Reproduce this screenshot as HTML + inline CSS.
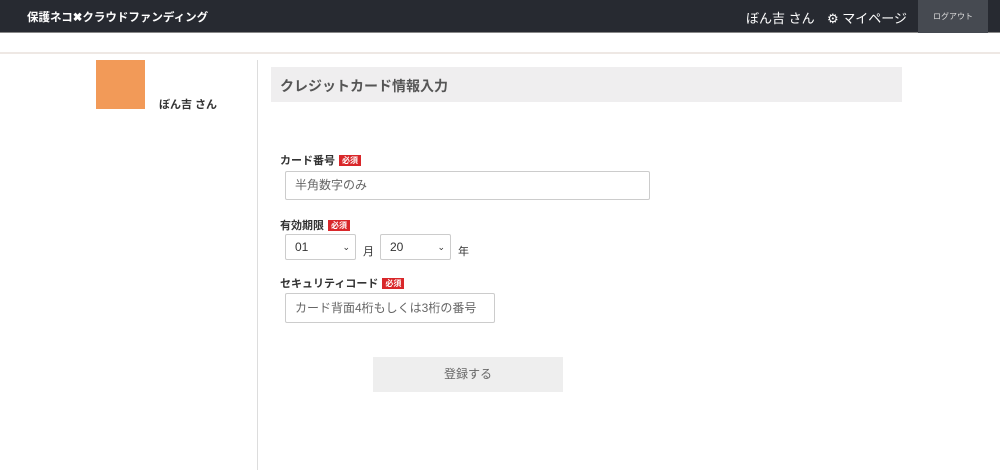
<!DOCTYPE html>
<html><head><meta charset="utf-8"><style>
*{box-sizing:border-box;margin:0;padding:0}
body{width:1000px;height:470px;background:#fff;font-family:"Liberation Sans","Noto Sans CJK JP",sans-serif;position:relative;overflow:hidden;color:#333}
.a{position:absolute}
.hdr{left:0;top:0;width:1000px;height:33px;background:#272a31;border-bottom:1px solid #888}
.req{display:inline-block;background:#d9272a;color:#fff;font-size:8px;font-weight:bold;padding:0 3px;line-height:11px;vertical-align:1px;margin-left:4px}
.lbl{font-size:11px;font-weight:bold;color:#333}
.box{border:1px solid #ccc;border-radius:2px;background:#fff;font-size:12px;color:#666;padding-left:9px}
</style></head><body>
<div class="a hdr"></div>
<div class="a" style="left:27px;top:9px;color:#fff;font-size:11.5px;font-weight:bold">保護ネコ✖クラウドファンディング</div>
<div class="a" style="left:746px;top:8px;color:#fff;font-size:13px">ぼん吉 さん</div>
<div class="a" style="left:827px;top:8px;color:#fff;font-size:13px"><span style="font-size:13px">⚙</span> マイページ</div>
<div class="a" style="left:918px;top:0;width:70px;height:33px;background:#464a51;color:#ddd;font-size:8px;line-height:33px;text-align:center">ログアウト</div>
<div class="a" style="left:0;top:52px;width:1000px;height:2px;background:#eee8e4"></div>
<div class="a" style="left:96px;top:60px;width:49px;height:49px;background:#f29a58"></div>
<div class="a" style="left:159px;top:96px;font-size:11px;font-weight:bold">ぼん吉 さん</div>
<div class="a" style="left:257px;top:60px;width:1px;height:410px;background:#ddd"></div>
<div class="a" style="left:271px;top:67px;width:631px;height:35px;background:#efeeef"></div>
<div class="a" style="left:280px;top:76px;font-size:14px;font-weight:bold;color:#555">クレジットカード情報入力</div>
<div class="a lbl" style="left:280px;top:152px">カード番号<span class="req">必須</span></div>
<div class="a box" style="left:285px;top:171px;width:365px;height:29px;line-height:27px">半角数字のみ</div>
<div class="a lbl" style="left:280px;top:217px">有効期限<span class="req">必須</span></div>
<div class="a box" style="left:285px;top:234px;width:71px;height:26px;line-height:24px;color:#333">01<span style="position:absolute;right:5px;font-size:9px">⌄</span></div>
<div class="a" style="left:363px;top:243px;font-size:11px">月</div>
<div class="a box" style="left:380px;top:234px;width:71px;height:26px;line-height:24px;color:#333">20<span style="position:absolute;right:5px;font-size:9px">⌄</span></div>
<div class="a" style="left:458px;top:243px;font-size:11px">年</div>
<div class="a lbl" style="left:280px;top:275px">セキュリティコード<span class="req">必須</span></div>
<div class="a box" style="left:285px;top:293px;width:210px;height:30px;line-height:28px">カード背面4桁もしくは3桁の番号</div>
<div class="a" style="left:373px;top:357px;width:190px;height:35px;background:#eee;color:#666;font-size:12px;line-height:35px;text-align:center">登録する</div>
</body></html>
